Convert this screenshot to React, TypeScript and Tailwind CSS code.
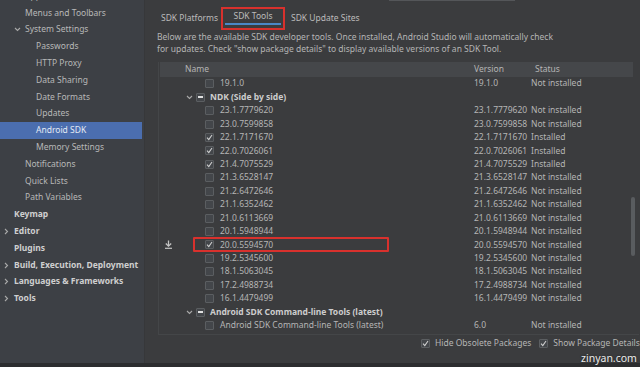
import React from "react";

type NavItem = {
  label: string;
  x: number;
  chev?: "down" | "right";
  bold?: boolean;
  selected?: boolean;
};

const nav: NavItem[] = [
  { label: "Appearance", x: 25 },
  { label: "Menus and Toolbars", x: 25 },
  { label: "System Settings", x: 25, chev: "down" },
  { label: "Passwords", x: 36 },
  { label: "HTTP Proxy", x: 36 },
  { label: "Data Sharing", x: 36 },
  { label: "Date Formats", x: 36 },
  { label: "Updates", x: 36 },
  { label: "Android SDK", x: 36, selected: true },
  { label: "Memory Settings", x: 36 },
  { label: "Notifications", x: 25 },
  { label: "Quick Lists", x: 25 },
  { label: "Path Variables", x: 25 },
  { label: "Keymap", x: 14, bold: true },
  { label: "Editor", x: 14, bold: true, chev: "right" },
  { label: "Plugins", x: 14, bold: true },
  { label: "Build, Execution, Deployment", x: 14, bold: true, chev: "right" },
  { label: "Languages & Frameworks", x: 14, bold: true, chev: "right" },
  { label: "Tools", x: 14, bold: true, chev: "right" },
];

const ndk: [string, boolean][] = [
  ["23.1.7779620", false],
  ["23.0.7599858", false],
  ["22.1.7171670", true],
  ["22.0.7026061", true],
  ["21.4.7075529", true],
  ["21.3.6528147", false],
  ["21.2.6472646", false],
  ["21.1.6352462", false],
  ["21.0.6113669", false],
  ["20.1.5948944", false],
  ["20.0.5594570", true],
  ["19.2.5345600", false],
  ["18.1.5063045", false],
  ["17.2.4988734", false],
  ["16.1.4479499", false],
];

function Chevron({ dir }: { dir: "down" | "right" }) {
  return (
    <svg width="7" height="7" viewBox="0 0 7 7" className="shrink-0">
      {dir === "down" ? (
        <polyline points="1,2 3.5,4.5 6,2" fill="none" stroke="#a9a9a9" strokeWidth="1.1" />
      ) : (
        <polyline points="2,1 4.5,3.5 2,6" fill="none" stroke="#a9a9a9" strokeWidth="1.1" />
      )}
    </svg>
  );
}

function Box({ checked, minus }: { checked?: boolean; minus?: boolean }) {
  return (
    <div className="w-[9px] h-[9px] shrink-0 rounded-[1px] border border-[#5b5e61] bg-[#43464a] flex items-center justify-center">
      {checked && (
        <svg width="7" height="7" viewBox="0 0 7 7">
          <polyline points="1,3.6 2.8,5.6 6,1" fill="none" stroke="#cfcfcf" strokeWidth="1.1" />
        </svg>
      )}
      {minus && <div className="w-[5px] h-[1.5px] bg-[#e0e0e0]" />}
    </div>
  );
}

function Sidebar() {
  return (
    <div className="w-[145px] shrink-0 bg-[#3d4045] overflow-hidden border-r border-[#37383a]">
      <div className="-mt-[12.2px]">
        {nav.map((n) => (
          <div
            key={n.label}
            className={`h-[16.8px] w-[142px] relative flex items-center ${n.selected ? "bg-[#4b6eaf]" : ""}`}
          >
            {n.chev && (
              <div className="absolute top-[5px]" style={{ left: n.chev === "down" ? 14 : 3 }}>
                <Chevron dir={n.chev} />
              </div>
            )}
            <span
              style={{ paddingLeft: n.x }}
              className={`whitespace-nowrap text-[8.5px] ${
                n.bold ? "font-bold text-[#cfcfcf]" : n.selected ? "text-[#e4eaf4]" : "text-[#b8b8b8]"
              }`}
            >
              {n.label}
            </span>
          </div>
        ))}
      </div>
    </div>
  );
}

function Row({
  name,
  version,
  status,
  checked,
  download,
  marked,
}: {
  name: string;
  version: string;
  status: string;
  checked?: boolean;
  download?: boolean;
  marked?: boolean;
}) {
  return (
    <div className="h-[13.45px] grid grid-cols-[314px_57px_1fr] items-center relative text-[8.5px] text-[#b5b5b5]">
      <div className="flex items-center">
        <div className="w-[45px] pl-[4px] flex items-center">
          {download && (
            <svg width="9" height="9" viewBox="0 0 9 9">
              <line x1="4.5" y1="0.5" x2="4.5" y2="6" stroke="#c4c4c4" strokeWidth="1.3" />
              <polyline points="1.8,3.5 4.5,6.2 7.2,3.5" fill="none" stroke="#c4c4c4" strokeWidth="1.3" />
              <line x1="1" y1="8.3" x2="8" y2="8.3" stroke="#c4c4c4" strokeWidth="1.2" />
            </svg>
          )}
        </div>
        <Box checked={checked} />
        <span className="pl-[6px] whitespace-nowrap">{name}</span>
      </div>
      <span className="whitespace-nowrap">{version}</span>
      <span className="whitespace-nowrap">{status}</span>
      {marked && (
        <div className="absolute left-[33px] w-[196px] top-[-1px] h-[15px] border-2 border-[#d8312d] rounded-[1px]" />
      )}
    </div>
  );
}

function Group({ name }: { name: string }) {
  return (
    <div className="h-[13.45px] flex items-center text-[8.5px]">
      <div className="w-[24px]" />
      <div className="w-[12px] pl-[2px]">
        <Chevron dir="down" />
      </div>
      <Box minus />
      <span className="pl-[5px] font-bold text-[#cdcdcd] whitespace-nowrap">{name}</span>
    </div>
  );
}

export default function App() {
  return (
    <div
      className="relative w-[640px] h-[367px] flex flex-col overflow-hidden bg-[#3b3c3e]"
      style={{ fontFamily: '"Noto Sans", "Liberation Sans", sans-serif' }}
    >
      <div className="h-[363px] flex">
        <Sidebar />
        <div className="flex-1 relative flex flex-col">
          <div className="h-[1px] ml-[244px] w-[126px] bg-[#545659]" />
          {/* tabs */}
          <div className="mt-[6px] h-[23px] flex text-[8.5px] text-[#bbbbbb]">
            <div className="w-[76px] pl-[16px] flex items-center">SDK Platforms</div>
            <div className="w-[64px] border-2 border-[#d8312d] flex flex-col items-center justify-end pb-[3px]">
              <span className="leading-[12px]">SDK Tools</span>
              <div className="mt-[1px] h-[2px] w-[56px] bg-[#4a88c7]" />
            </div>
            <div className="pl-[6px] flex items-center">SDK Update Sites</div>
          </div>
          <div className="mt-[1px] pl-[12px] text-[8.5px] leading-[12px] text-[#b5b5b5]">
            <div className="whitespace-nowrap">
              Below are the available SDK developer tools. Once installed, Android Studio will automatically check
            </div>
            <div className="whitespace-nowrap">
              for updates. Check "show package details" to display available versions of an SDK Tool.
            </div>
          </div>
          {/* table */}
          <div className="mt-[7px] ml-[13px] w-[481px] h-[273px] relative border-l border-b border-[#444648] pl-[1px]">
            <div className="h-[15px] mr-[6px] bg-[#45474a] grid grid-cols-[314px_57px_1fr] items-center text-[8.5px] text-[#b5b5b5]">
              <span className="pl-[25px]">Name</span>
              <span>Version</span>
              <span className="pl-[4px]">Status</span>
            </div>
            <Row name="19.1.0" version="19.1.0" status="Not installed" />
            <Group name="NDK (Side by side)" />
            {ndk.map(([v, c]) => (
              <Row
                key={v}
                name={v}
                version={v}
                status={c && v !== "20.0.5594570" ? "Installed" : "Not installed"}
                checked={c}
                download={v === "20.0.5594570"}
                marked={v === "20.0.5594570"}
              />
            ))}
            <Group name="Android SDK Command-line Tools (latest)" />
            <Row name="Android SDK Command-line Tools (latest)" version="6.0" status="Not installed" />
            <div className="absolute left-[472px] top-[135px] w-[4px] h-[59px] rounded-full bg-[#595c5f]" />
          </div>
          {/* options */}
          <div className="mt-[2px] pl-[276px] flex items-center gap-[8px] text-[8.5px] text-[#b5b5b5]">
            <div className="flex items-center gap-[5px]">
              <Box checked />
              <span className="whitespace-nowrap">Hide Obsolete Packages</span>
            </div>
            <div className="flex items-center gap-[5px]">
              <Box checked />
              <span className="whitespace-nowrap">Show Package Details</span>
            </div>
          </div>
        </div>
      </div>
      <div className="h-[4px] bg-[#2c2d2f]" />
      <div className="absolute left-[581px] top-[351px] text-[10.5px] leading-[14px] text-[#ececec] [text-shadow:0_0_2px_#222]">
        zinyan.com
      </div>
    </div>
  );
}
